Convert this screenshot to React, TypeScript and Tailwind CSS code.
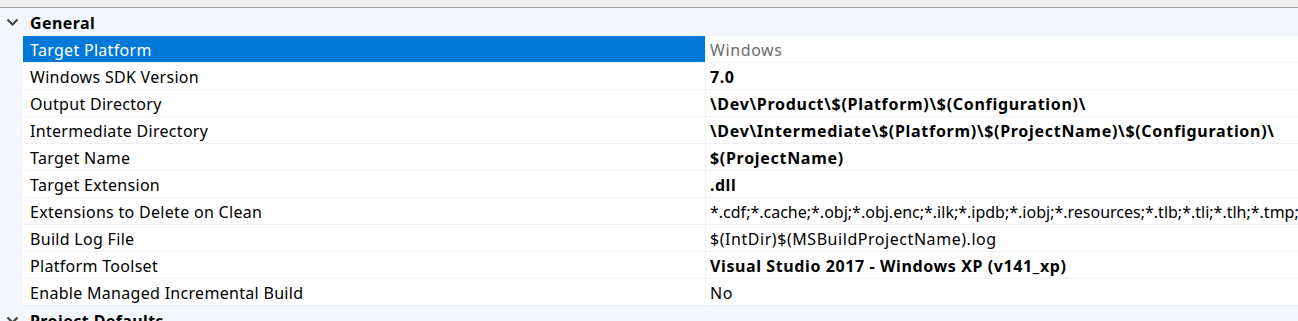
import React from "react";

type Row = { label: string; value: string; bold?: boolean; dim?: boolean; selected?: boolean; track: string };

const rows: Row[] = [
  { label: "Target Platform", value: "Windows", dim: true, selected: true, track: "tracking-[0.6px]" },
  { label: "Windows SDK Version", value: "7.0", bold: true, track: "tracking-[0.5px]" },
  { label: "Output Directory", value: "\\Dev\\Product\\$(Platform)\\$(Configuration)\\", bold: true, track: "tracking-[0.7px]" },
  { label: "Intermediate Directory", value: "\\Dev\\Intermediate\\$(Platform)\\$(ProjectName)\\$(Configuration)\\", bold: true, track: "tracking-[0.7px]" },
  { label: "Target Name", value: "$(ProjectName)", bold: true, track: "tracking-[0.7px]" },
  { label: "Target Extension", value: ".dll", bold: true, track: "tracking-[0.5px]" },
  { label: "Extensions to Delete on Clean", value: "*.cdf;*.cache;*.obj;*.obj.enc;*.ilk;*.ipdb;*.iobj;*.resources;*.tlb;*.tli;*.tlh;*.tmp;*.rsp;*.pgc;*.pgd;*.meta;*.tlog;*.manifest;*.res;*.pch;*.exp;*.idb;*.rep;*.xdc;*.pdb;*_manifest.rc;*.bsc;*.sbr;*.xml;*.metagen;*.bi", track: "tracking-normal" },
  { label: "Build Log File", value: "$(IntDir)$(MSBuildProjectName).log", track: "tracking-[0.55px]" },
  { label: "Platform Toolset", value: "Visual Studio 2017 - Windows XP (v141_xp)", bold: true, track: "tracking-[0.6px]" },
  { label: "Enable Managed Incremental Build", value: "No", track: "tracking-[0.5px]" },
];

function Chevron() {
  return (
    <svg width="13" height="9" viewBox="0 0 13 9" className="shrink-0">
      <path d="M1.5 1.5 L6.5 6.5 L11.5 1.5" fill="none" stroke="#444" strokeWidth="2.2" />
    </svg>
  );
}

function Header({ title }: { title: string }) {
  return (
    <div className="flex h-[28px] items-center">
      <div className="flex w-[23px] justify-center pl-[1px]">
        <Chevron />
      </div>
      <div className="pl-[7px] pt-[2px] font-bold text-[16px] tracking-[0.4px] text-black">{title}</div>
    </div>
  );
}

export default function App() {
  return (
    <div
      className="h-[321px] w-[1298px] overflow-hidden bg-[#f3f6fb] text-[16px] leading-none"
      style={{ fontFamily: '"Segoe UI", "Noto Sans", "Open Sans", sans-serif' }}
    >
      <div className="h-[7px] bg-[#f0f0f0]" />
      <div className="h-[1px] bg-[#a0a0a0]" />
      <Header title="General" />
      <div className="ml-[23px] flex flex-col">
        {rows.map((r) => (
          <div key={r.label} className="flex h-[27px] border-b border-[#eef0f6] bg-white">
            <div
              className={`flex w-[682px] shrink-0 items-center pl-[7px] pt-[1px] tracking-[0.3px] ${
                r.selected ? "bg-[#0078d7] text-white" : "text-black"
              }`}
            >
              {r.label}
            </div>
            <div className="w-[1px] shrink-0 bg-[#eef0f6]" />
            <div
              className={`flex min-w-0 flex-1 items-center overflow-hidden whitespace-nowrap pl-[4px] pt-[1px] ${r.track} ${
                r.bold ? "font-bold text-black" : r.dim ? "text-[#6d6d6d]" : "text-black"
              }`}
            >
              {r.value}
            </div>
          </div>
        ))}
      </div>
      <Header title="Project Defaults" />
    </div>
  );
}
